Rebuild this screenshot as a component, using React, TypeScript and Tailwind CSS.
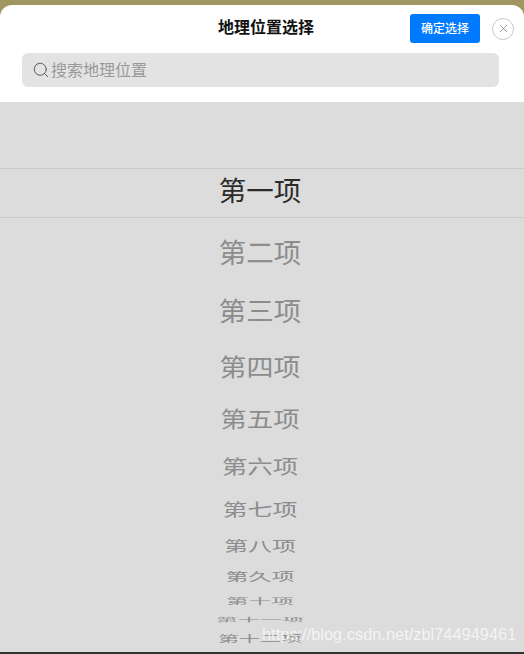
import React from 'react';
import { Search, X } from 'lucide-react';

const font = "font-['Microsoft_YaHei','Noto_Sans_CJK_SC','Liberation_Sans',sans-serif]";

// wheel rows below the selected one get squashed more and more, like a 3D picker
const wheelItems = [
  { label: '第二项', row: 'h-[60px]', text: 'text-[27.5px] text-[#8c8c8c] scale-y-[1]' },
  { label: '第三项', row: 'h-[56px]', text: 'text-[27.5px] text-[#8c8c8c] scale-y-[0.96]' },
  { label: '第四项', row: 'h-[54px]', text: 'text-[27px] text-[#8c8c8c] scale-y-[0.9]' },
  { label: '第五项', row: 'h-[51px]', text: 'text-[26px] text-[#8c8c8c] scale-x-[1.02] scale-y-[0.84]' },
  { label: '第六项', row: 'h-[45px]', text: 'text-[25.5px] text-[#8c8c8c] scale-y-[0.76]' },
  { label: '第七项', row: 'h-[40px]', text: 'text-[25px] text-[#8c8c8c] scale-y-[0.68]' },
  { label: '第八项', row: 'h-[34px]', text: 'text-[24px] text-[#8c8c8c] scale-y-[0.58]' },
  { label: '第久项', row: 'h-[28px]', text: 'text-[23px] text-[#8c8c8c] scale-y-[0.47]' },
  { label: '第十项', row: 'h-[21px]', text: 'text-[22.5px] text-[#8c8c8c] scale-y-[0.36]' },
  { label: '第十一项', row: 'h-[16px]', text: 'text-[22px] text-[#8c8c8c] scale-y-[0.22]' },
  { label: '第十二项', row: 'h-[22px]', text: 'text-[21px] text-[#8c8c8c] scale-y-[0.45]' },
];

const App: React.FC = () => {
  return (
    <div className={`${font} relative w-[524px] h-[654px] overflow-hidden bg-[#a09660] pt-[5px]`}>
      <div className="bg-white rounded-t-[12px] h-[97px] pt-[9px]">
        <div className="flex items-center h-[29px]">
          <span className="ml-[218px] text-[16px] font-bold text-[#111] leading-none -translate-y-[3px]">地理位置选择</span>
          <button className="ml-[96px] w-[70px] h-[29px] rounded-[3px] bg-[#007aff] text-white text-[12px] font-medium pb-[2px]">
            确定选择
          </button>
          <button className="ml-[12px] w-[22px] h-[22px] rounded-full border border-[#c8c8c8] flex items-center justify-center">
            <X className="h-[13px] w-[13px] text-[#777]" strokeWidth={1.25} />
          </button>
        </div>
        <div className="ml-[22px] mt-[10px] w-[477px] h-[34px] rounded-[6px] bg-[#e3e3e3] flex items-center pl-[10px]">
          <Search className="h-[18px] w-[18px] text-[#555]" strokeWidth={1.25} />
          <span className="ml-[1px] text-[16px] text-[#999] leading-none -translate-y-[1px]">搜索地理位置</span>
        </div>
      </div>

      <div className="bg-[#dcdcdc] h-[550px] pt-[66px] overflow-hidden">
        <div className="h-[50px] border-y border-[#c9c9c9] flex items-center justify-center">
          <span className="text-[27.5px] text-[#2b2b2b] leading-none -translate-x-[2px] -translate-y-[3px]">第一项</span>
        </div>
        {wheelItems.map((item, index) => (
          <div key={index} className={`${item.row} flex items-center justify-center ${index === 0 ? 'mt-[6px]' : ''}`}>
            <span className={`${item.text} leading-none whitespace-nowrap -translate-x-[2px] -translate-y-[2px]`}>{item.label}</span>
          </div>
        ))}
      </div>
      <div className="h-[2px] bg-[#333]" />

      <span className="absolute left-[262px] top-[626px] text-[16.4px] text-white/70 font-['Liberation_Sans',sans-serif] leading-none">
        https://blog.csdn.net/zbl744949461
      </span>
    </div>
  );
};

export default App;
